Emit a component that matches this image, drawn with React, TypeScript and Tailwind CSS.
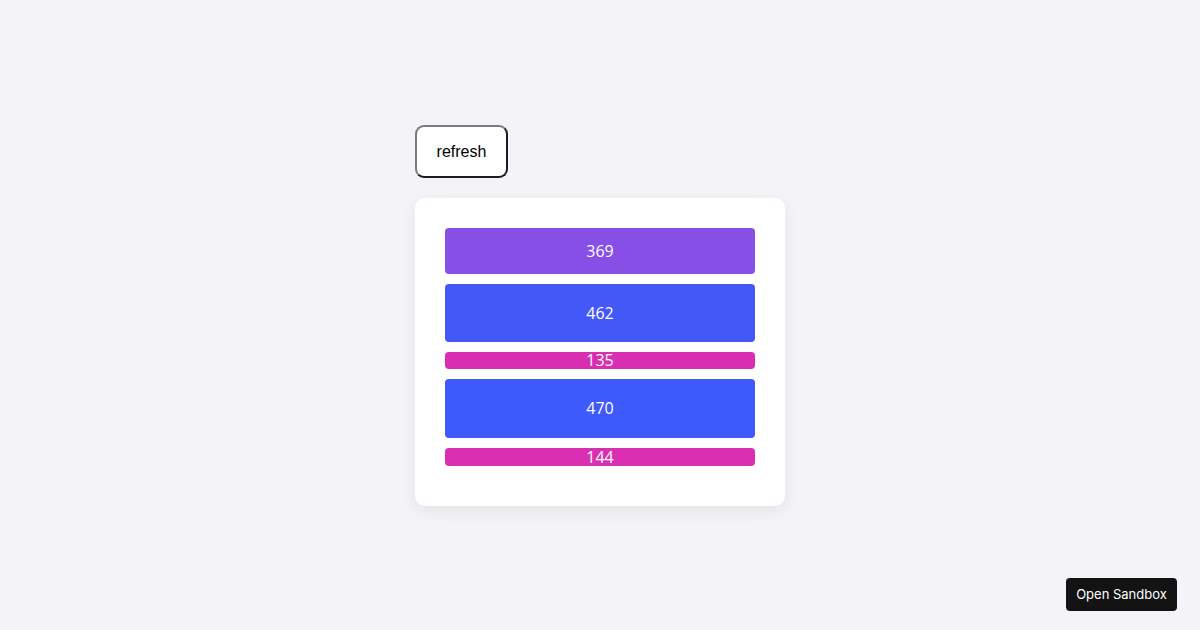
import React, { useState } from "react";

interface Bar {
  value: number;
  color: string;
}

const initialBars: Bar[] = [
  { value: 369, color: "#874fe6" },
  { value: 462, color: "#4458f8" },
  { value: 135, color: "#d82fb2" },
  { value: 470, color: "#3f5afc" },
  { value: 144, color: "#d830b1" },
];

const palette = ["#874fe6", "#4458f8", "#d82fb2", "#3f5afc", "#d830b1"];

export default function App() {
  const [bars, setBars] = useState<Bar[]>(initialBars);

  // new random values, same palette cycling
  const refresh = () => {
    setBars(
      bars.map((_, i) => ({
        value: Math.floor(Math.random() * 500),
        color: palette[i % palette.length],
      }))
    );
  };

  return (
    <div className="relative min-h-[630px] w-full bg-[#f4f3f8]">
      <div className="flex flex-col items-center pt-[125px]">
        <div className="w-[370px]">
          <button
            onClick={refresh}
            className="h-[53px] w-[93px] rounded-[9px] border-2 border-t-[#7a7a84] border-l-[#7a7a84] border-r-[#1c1c22] border-b-[#1c1c22] bg-white text-[16px] text-black font-['Liberation_Sans',Arial,sans-serif]"
          >
            refresh
          </button>
          <div className="mt-[20px] rounded-[10px] bg-white px-[30px] pt-[30px] pb-[30px] shadow-[0_5px_16px_rgba(0,0,0,0.07)]">
            {bars.map((bar, i) => (
              <div
                key={i}
                className="mb-[10px] flex items-center justify-center rounded-[4px] text-[16px] text-white font-['Open_Sans',sans-serif]"
                style={{ height: bar.value / 8, backgroundColor: bar.color }}
              >
                {bar.value}
              </div>
            ))}
          </div>
        </div>
      </div>
      <button className="absolute right-[23px] bottom-[19px] h-[33px] w-[111px] rounded-[4px] bg-[#131313] text-[13px] text-white font-['Inter',sans-serif]">
        Open Sandbox
      </button>
    </div>
  );
}
